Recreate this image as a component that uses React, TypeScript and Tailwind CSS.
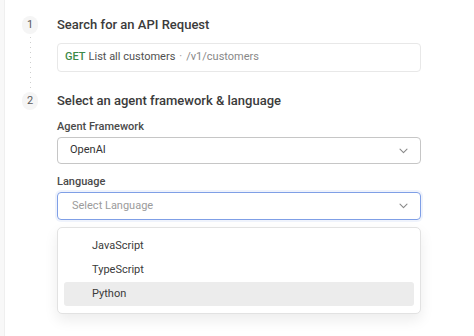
import React from "react";

function Chevron() {
  return (
    <svg width="9" height="6" viewBox="0 0 9 6" fill="none" className="shrink-0">
      <path d="M1 1.2l3.5 3.5 3.5-3.5" stroke="#8a8a8a" strokeWidth="1.1" strokeLinecap="round" strokeLinejoin="round" />
    </svg>
  );
}

function StepNumber({ n }: { n: number }) {
  return (
    <div className="flex h-[18px] w-[16px] items-center justify-center rounded-full bg-[#f5f5f5] text-[11px] text-[#5a5a5a]">
      {n}
    </div>
  );
}

export default function App() {
  const languages = ["JavaScript", "TypeScript", "Python"];
  const selected = "Python";

  return (
    <div
      className="flex h-[336px] w-[474px] overflow-hidden bg-white"
      style={{ fontFamily: "Roboto, 'Liberation Sans', sans-serif" }}
    >
      {/* left rail */}
      <div className="w-[5px] shrink-0 border-r border-[#efefef] bg-[#f8f8f8]" />

      <div className="flex-1 pl-[17px] pr-[53px] pt-[16px]">
        {/* Step 1 */}
        <div className="flex gap-[19px]">
          <div className="flex w-[16px] flex-col items-center">
            <StepNumber n={1} />
            <div className="mt-[3px] mb-[4px] w-px flex-1 bg-[image:repeating-linear-gradient(to_bottom,#cfcfcf_0px,#cfcfcf_1px,transparent_1px,transparent_5px)]" />
          </div>
          <div className="flex-1 pb-[20px]">
            <h2 className="h-[18px] text-[13px] leading-[18px] font-medium text-[#3b3b3b]">
              Search for an API Request
            </h2>
            <div className="mt-[9px] flex h-[29px] items-center rounded-[4px] border border-[#e8e8e8] px-[7px] text-[11px]">
              <span className="font-medium text-[#3c8a48]">GET</span>
              <span className="ml-[3px] text-[#505050]">List all customers</span>
              <span className="mx-[4px] text-[#9a9a9a]">·</span>
              <span className="text-[#888]">/v1/customers</span>
            </div>
          </div>
        </div>

        {/* Step 2 */}
        <div className="flex gap-[19px]">
          <div className="flex w-[16px] flex-col items-center">
            <StepNumber n={2} />
          </div>
          <div className="flex-1">
            <h2 className="h-[18px] text-[13px] leading-[18px] font-medium text-[#3b3b3b]">
              Select an agent framework &amp; language
            </h2>

            <label className="mt-[9px] block h-[16px] text-[11px] leading-[16px] font-medium text-[#4a4a4a]">
              Agent Framework
            </label>
            <button className="mt-[2px] flex h-[27px] w-full items-center justify-between rounded-[4px] border border-[#c6c6c6] pl-[12px] pr-[12px] text-[11px] text-[#333]">
              <span>OpenAI</span>
              <Chevron />
            </button>

            <label className="mt-[10px] block h-[16px] text-[11px] leading-[16px] font-medium text-[#4a4a4a]">
              Language
            </label>
            <button className="mt-[2px] flex h-[28px] w-full items-center justify-between rounded-[4px] border border-[#7f9fe6] pl-[14px] pr-[12px] text-[11px] text-[#9b9b9b] shadow-[0_0_0_2px_rgba(127,159,230,0.12)]">
              <span>Select Language</span>
              <Chevron />
            </button>

            <div className="mt-[7px] rounded-[5px] border border-[#e2e2e2] bg-white px-[6px] pt-[6px] pb-[7px] shadow-[0_6px_14px_rgba(0,0,0,0.08)]">
              <ul className="flex flex-col">
                {languages.map((lang) => (
                  <li
                    key={lang}
                    className={`flex h-[24px] items-center rounded-[3px] pl-[28px] text-[11px] text-[#3a3a3a] ${
                      lang === selected ? "bg-[#ececec]" : ""
                    }`}
                  >
                    {lang}
                  </li>
                ))}
              </ul>
            </div>
          </div>
        </div>
      </div>
    </div>
  );
}
